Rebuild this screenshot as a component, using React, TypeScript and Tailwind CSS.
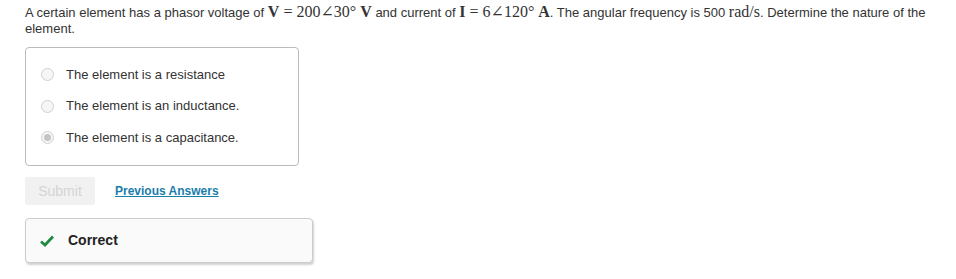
import React from "react";

const options = [
  "The element is a resistance",
  "The element is an inductance.",
  "The element is a capacitance.",
];

const M: React.FC<{ children: React.ReactNode; b?: boolean }> = ({ children, b }) => (
  <span
    className={`text-[16px] leading-[17px] ${b ? "font-bold" : ""}`}
    style={{ fontFamily: '"Liberation Serif", "DejaVu Serif", serif' }}
  >
    {children}
  </span>
);

export default function App() {
  return (
    <div
      className="w-[956px] h-[279px] bg-white text-[#333] text-[13px] pl-[25px] pt-[3px]"
      style={{ fontFamily: '"Liberation Sans", Arial, sans-serif' }}
    >
      <div className="flex flex-col leading-[17px]">
        <div className="flex items-baseline whitespace-pre h-[17px]">
          <span>A certain element has a phasor voltage of </span>
          <M b>V</M>
          <M> = 200∠30° </M>
          <M b>V</M>
          <span> and current of </span>
          <M b>I</M>
          <M> = 6∠120° </M>
          <M b>A</M>
          <span>. The angular frequency is 500 </span>
          <M>rad/s</M>
          <span>. Determine the nature of the</span>
        </div>
        <span className="h-[17px]">element.</span>
      </div>

      <div className="mt-[10px] w-[274px] h-[119px] border border-[#bbb] rounded-[4px] pt-[20px] pl-[15px] flex flex-col gap-[18.5px]">
        {options.map((o, i) => (
          <label key={o} className="flex items-center h-[13px]">
            <span className="w-[13px] h-[13px] rounded-full border border-[#d0d0d0] bg-[#f6f6f6] flex items-center justify-center">
              {i === 2 && <span className="w-[7px] h-[7px] rounded-full bg-[#c4c4c4]" />}
            </span>
            <span className="ml-[12px]">{o}</span>
          </label>
        ))}
      </div>

      <div className="mt-[11px] flex items-center">
        <button
          type="button"
          disabled
          className="w-[70px] h-[28px] bg-[#f1f1f1] rounded-[2px] text-[#d4d4d4] text-[14px]"
        >
          Submit
        </button>
        <a href="#" className="ml-[20px] font-bold underline text-[#1a7eab] text-[12px]">
          Previous Answers
        </a>
      </div>

      <div className="mt-[13px] w-[288px] h-[45px] border border-[#ccc] rounded-[4px] bg-[#fafafa] shadow-[1px_2px_2px_rgba(0,0,0,0.18)] flex items-center pl-[14px]">
        <svg width="14" height="12" viewBox="0 0 14 12">
          <path d="M1 6.5 L5 10 L13 1.5" fill="none" stroke="#1e8a3e" strokeWidth="2.8" />
        </svg>
        <span className="ml-[14px] font-bold text-[14px] text-[#222]">Correct</span>
      </div>
    </div>
  );
}
